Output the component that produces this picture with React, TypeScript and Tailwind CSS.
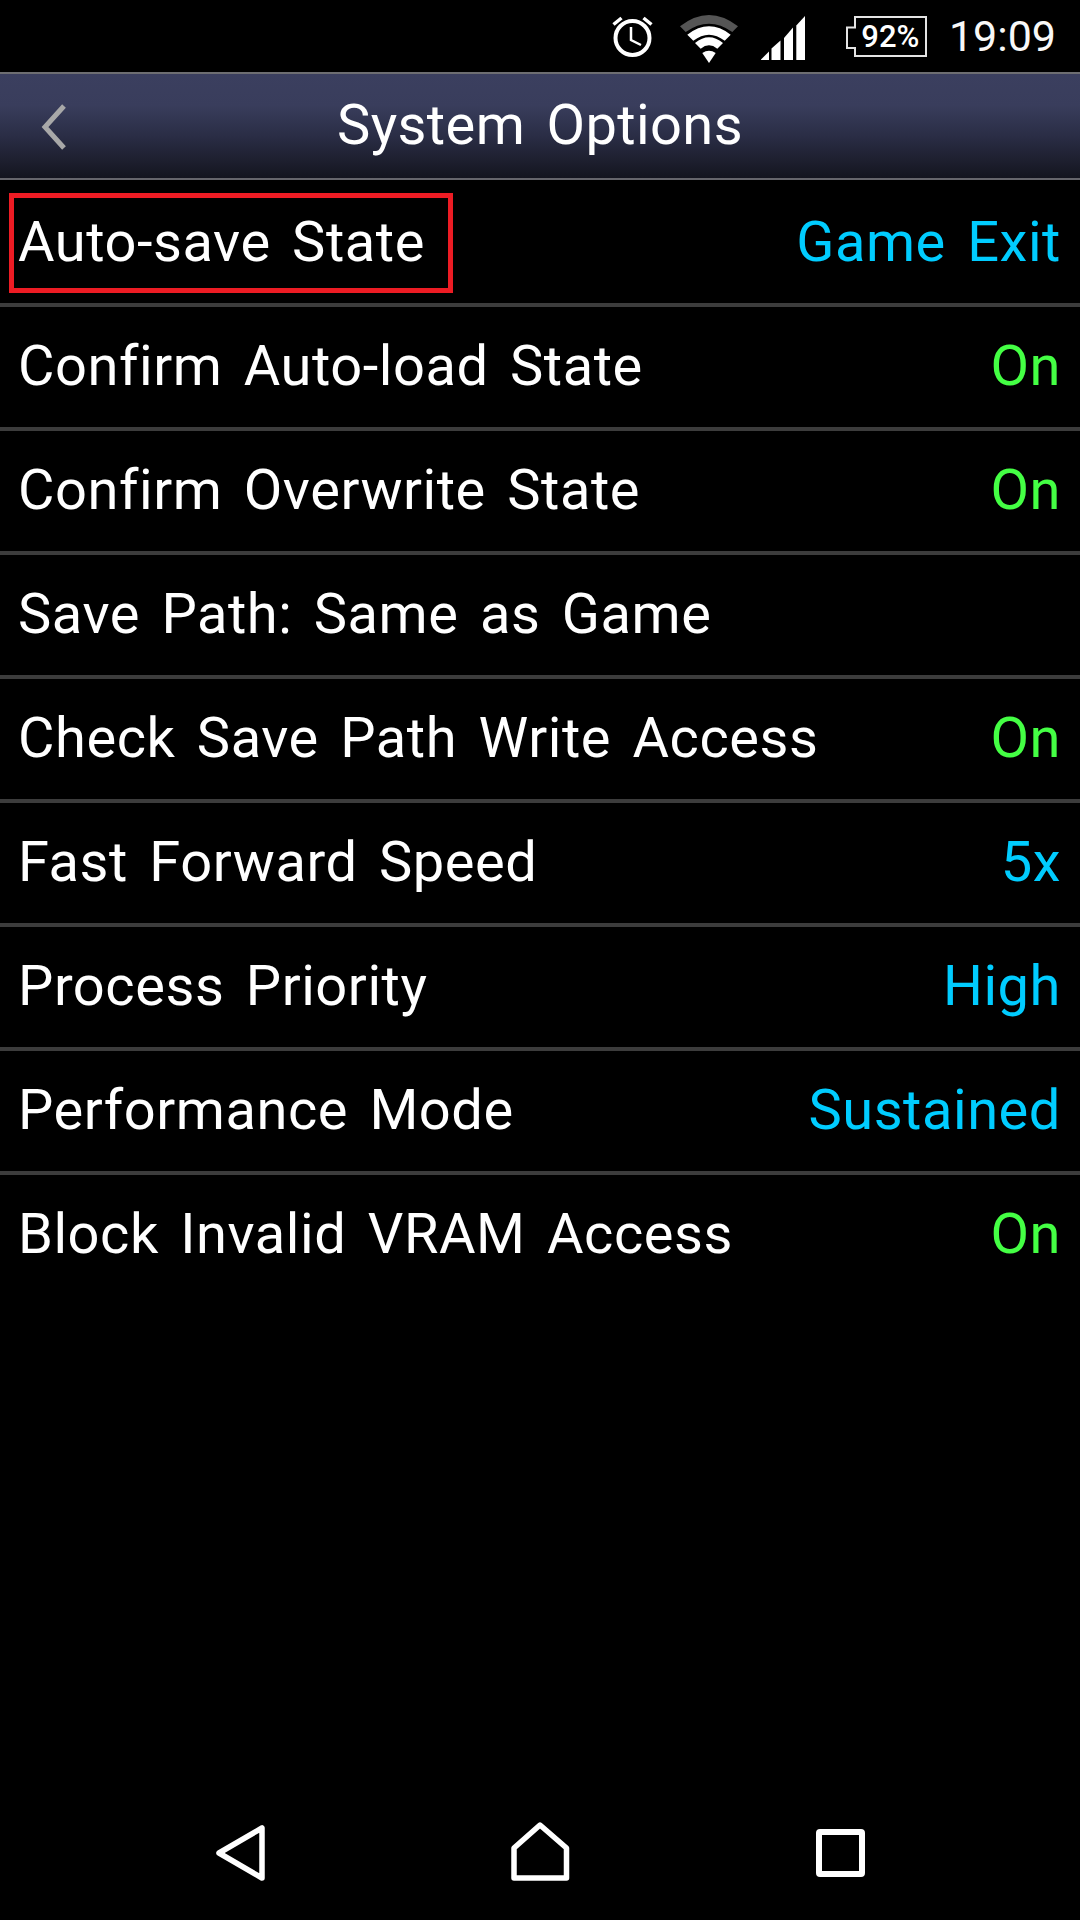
const rows: [string, string?, string?][] = [
  ["Auto-save State", "Game Exit", "text-[#00ccff]"],
  ["Confirm Auto-load State", "On", "text-[#44ff44]"],
  ["Confirm Overwrite State", "On", "text-[#44ff44]"],
  ["Save Path: Same as Game"],
  ["Check Save Path Write Access", "On", "text-[#44ff44]"],
  ["Fast Forward Speed", "5x", "text-[#00ccff]"],
  ["Process Priority", "High", "text-[#00ccff]"],
  ["Performance Mode", "Sustained", "text-[#00ccff]"],
  ["Block Invalid VRAM Access", "On", "text-[#44ff44]"],
];

function StatusIcons() {
  return (
    <>
      <svg width="41" height="42" viewBox="0 0 41 42" className="mr-[27px]" fill="none" stroke="white">
        <circle cx="20.5" cy="23" r="17" strokeWidth="4" />
        <path d="M19 12v13l10 5" strokeWidth="2.5" />
        <path d="M1.500 9.500 9.500 3M39.500 9.500 31.500 3" strokeWidth="3.5" />
      </svg>
      <svg width="58" height="48" viewBox="0 0 58 48" className="mr-[23px] mt-[6px]">
        <path d="M0 11.300Q29-11.300 58 11.300L52.300 17Q29 .4 5.700 17Z" fill="#555" />
        <path d="M7.300 19.700Q29 2.900 50.700 19.700L44.700 25.700Q29 13.700 13.300 25.700Z" fill="white" />
        <path d="M15 28Q29 16.600 43 28L37.300 33.700Q29 26.900 20.700 33.700Z" fill="white" />
        <path d="M22.300 38Q29 33.400 35.700 38L29 48Z" fill="white" />
      </svg>
      <svg width="44" height="44" viewBox="0 0 44 44" className="mr-[41px] mt-[4px]" fill="white">
        <path d="M0 44V43.500L8 35.500V44Z" />
        <path d="M10.500 44V32.500L19.500 24.500V44Z" />
        <path d="M23 44V22L32 11.500V44Z" />
        <path d="M35.300 44V9.500L44 0V44Z" />
      </svg>
      <div className="relative flex h-[41px] w-[81px] items-center justify-center">
        <svg width="81" height="41" viewBox="0 0 81 41" className="absolute inset-0" fill="none" stroke="#e4e4e4" strokeWidth="2">
          <path d="M9 1H80V40H9V32H1V11.500H9Z" />
        </svg>
        <span className="relative pl-[8px] text-[31px] font-medium leading-none text-white">92%</span>
      </div>
      <span className="ml-[22px] mr-[24px] text-[43px] leading-none text-[#f8f8f8]">19:09</span>
    </>
  );
}

export default function App() {
  return (
    <div className="relative min-h-[1920px] w-[1080px] overflow-hidden bg-black font-['Roboto',sans-serif] text-white">
      <div className="flex h-[72px] items-center justify-end">
        <StatusIcons />
      </div>
      <header className="relative flex h-[108px] items-center justify-center border-y-2 border-t-[#6e6e72] border-b-[#66666c] bg-[linear-gradient(#3b3f5f_0%,#393d5c_30%,#2a2d45_60%,#14151f_100%)] pb-[2px]">
        <svg width="26" height="46" viewBox="0 0 26 46" className="absolute left-[41px] top-[30px]" fill="none" stroke="#a8a8a8" strokeWidth="5">
          <path d="M23 2 4 23l19 21" />
        </svg>
        <span className="text-[56px] leading-none tracking-[0.4px] [word-spacing:7px]">System Options</span>
      </header>
      <main className="pt-[3px]">
        {rows.map(([label, value, color]) => (
          <div key={label} className="flex h-[124px] items-center justify-between border-b-[4px] border-[#3c3c3c] pb-[3px] pl-[18px] pr-[19px] text-[56px] leading-none tracking-[0.55px] [word-spacing:7px] last:border-transparent">
            <span>{label}</span>
            {value && <span className={color}>{value}</span>}
          </div>
        ))}
      </main>
      <div className="absolute left-[9px] top-[193px] h-[100px] w-[444px] border-[5px] border-[#ed1c24]" />
      <nav className="absolute inset-x-0 bottom-0 h-[130px]">
        <svg width="1080" height="130" viewBox="0 0 1080 130" className="absolute left-0 top-0" fill="none" stroke="white" strokeWidth="5.5" strokeLinejoin="round">
          <path d="M262 38V88L219 63Z" />
          <path d="M514 88V58L540 35 566.500 58V88Z" />
          <rect x="819" y="42" width="43" height="42" strokeWidth="6" rx="1" />
        </svg>
      </nav>
    </div>
  );
}
